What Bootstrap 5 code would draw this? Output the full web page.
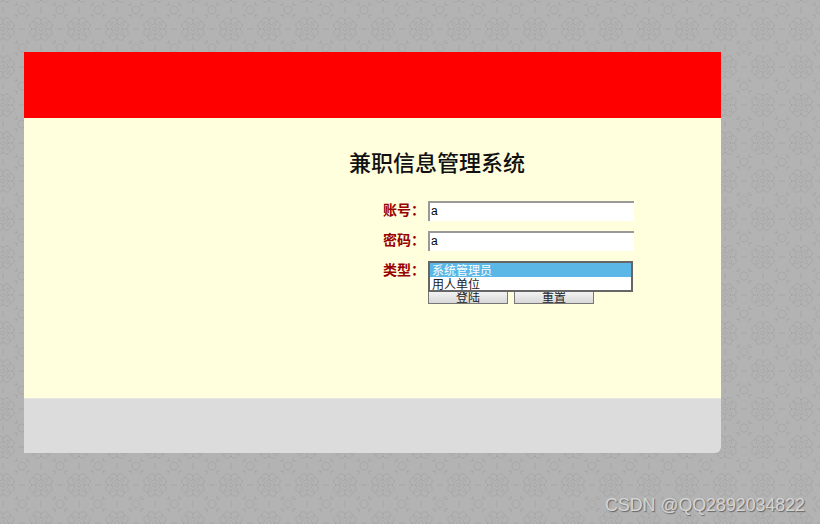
<!DOCTYPE html>
<html lang="zh"><head><meta charset="utf-8"><title>兼职信息管理系统</title>
<link href="https://cdn.jsdelivr.net/npm/bootstrap@5.3.0/dist/css/bootstrap.min.css" rel="stylesheet">
<style>
html,body{height:100%}
body{margin:0;background-color:#b3b3b3;background-position:-16px 10px;background-image:url("data:image/svg+xml,%3Csvg xmlns='http://www.w3.org/2000/svg' width='38' height='38' fill='none' stroke='%23a2a2a2' stroke-width='1' stroke-dasharray='1.5 .6'%3E%3Ccircle cx='19' cy='19' r='5'/%3E%3Ccircle cx='19' cy='19' r='2'/%3E%3Cpath d='M19 14V9M19 24v5M14 19H9M24 19h5'/%3E%3Cpath d='M19 10c-2-3-6-3-7 0s3 4 4 2M19 10c2-3 6-3 7 0s-3 4-4 2M19 28c-2 3-6 3-7 0s3-4 4-2M19 28c2 3 6 3 7 0s-3-4-4-2M10 19c-3-2-3-6 0-7s4 3 2 4M10 19c-3 2-3 6 0 7s4-3 2-4M28 19c3-2 3-6 0-7s-4 3-2 4M28 19c3 2 3 6 0 7s-4-3-2-4'/%3E%3Ccircle cx='0' cy='0' r='4'/%3E%3Ccircle cx='38' cy='0' r='4'/%3E%3Ccircle cx='0' cy='38' r='4'/%3E%3Ccircle cx='38' cy='38' r='4'/%3E%3Cpath d='M5 5h3M33 5h-3M5 33h3M33 33h-3M5 5v3M33 5v3M5 33v-3M33 33v-3M19 0v3M19 38v-3M0 19h3M38 19h-3'/%3E%3C/svg%3E");font-family:"Liberation Sans",sans-serif;overflow:hidden;position:relative}
.sheet{width:697px;margin:52px 0 0 24px;border-radius:0 0 6px 0;overflow:hidden}
.banner{height:66px;background:#f00}
.mainarea{height:280px;background:#ffd;padding:30px 0 0 325px}
.foot{height:55px;background:#dcdcdc;border-top:1px solid #e6e6e6}
.ttl{font-family:"Noto Sans CJK SC",serif;font-size:22px;font-weight:500;line-height:26px;color:#111;margin:0 0 27px}
.fgrid{width:290px}
.lab{width:79px;text-align:left;padding-left:34px;font:700 14px/16px "Noto Sans CJK SC",serif;color:#900;white-space:nowrap}
.inp{width:206px;height:20px;border:0;border-top:2px solid #999;border-left:2px solid #999;background:#fff;padding:0 1px 2px;font:12px/16px "Liberation Sans",sans-serif;color:#000;outline:0}
.rowx{margin-bottom:10px}
.lst{position:relative;z-index:1;width:205px;height:31px;border:2px solid #666;background:#fff;font:12px/13px "Noto Sans CJK SC",sans-serif;color:#222}
.opt{height:14px;padding-left:2px;overflow:hidden}
.optsel{background:#5bb8e6;color:#fff}
.btnrow{margin:-1px 0 0 79px;height:13px}
.sbtn{width:80px;height:13px;border:1px solid #777;border-top-color:#bbb;background:linear-gradient(#f2f2f2,#d8d8d8);font:12px/9px "Noto Sans CJK SC",sans-serif;color:#222;padding:0;overflow:hidden}
.gapb{margin-left:-2px}
.wmark{position:absolute;right:15px;bottom:9px;font:17.8px/20px "Liberation Sans",sans-serif;color:#d4d4d4;text-shadow:1px 1px 1px #666}
</style></head><body>
<div class="sheet">
<div class="banner"></div>
<div class="mainarea">
<h1 class="ttl">兼职信息管理系统</h1>
<div class="fgrid">
<div class="d-flex rowx"><div class="lab">账号：</div><input class="inp" value="a"></div>
<div class="d-flex rowx"><div class="lab">密码：</div><input class="inp" value="a"></div>
<div class="d-flex"><div class="lab">类型：</div><div class="lst"><div class="opt optsel">系统管理员</div><div class="opt">用人单位</div></div></div>
<div class="d-flex gap-2 btnrow"><div class="sbtn text-center">登陆</div><div class="sbtn text-center gapb">重置</div></div>
</div>
</div>
<div class="foot"></div>
</div>
<div class="wmark">CSDN @QQ2892034822</div>
<script src="https://cdn.jsdelivr.net/npm/bootstrap@5.3.0/dist/js/bootstrap.bundle.min.js"></script>
</body></html>
